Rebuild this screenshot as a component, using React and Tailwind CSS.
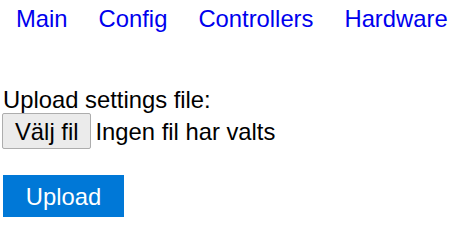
import React from "react";

const links = ["Main", "Config", "Controllers", "Hardware"];

const App = () => {
  return (
    <div className="bg-white text-black font-['Liberation_Sans',Arial,sans-serif] text-[23.8px] leading-[27px] min-h-[243px]">
      <nav className="flex gap-[31px] pl-[16px] pt-[5px]">
        {links.map((l) => (
          <a key={l} href="#" className="text-[#0000ee] no-underline">
            {l}
          </a>
        ))}
      </nav>

      <div className="mt-[54px] pl-[2px]">
        <div className="pl-[1px]">Upload settings file:</div>
        <div className="flex items-center">
          <button className="h-[36px] px-[12px] bg-[#ebebeb] border border-[#adadad] rounded-[2px] leading-[27px]">
            Välj fil
          </button>
          <span className="ml-[4px]">Ingen fil har valts</span>
        </div>
        <button className="mt-[26px] ml-[1px] h-[42px] w-[121px] bg-[#0078d7] text-white leading-[27px]">
          Upload
        </button>
      </div>
    </div>
  );
};

export default App;
